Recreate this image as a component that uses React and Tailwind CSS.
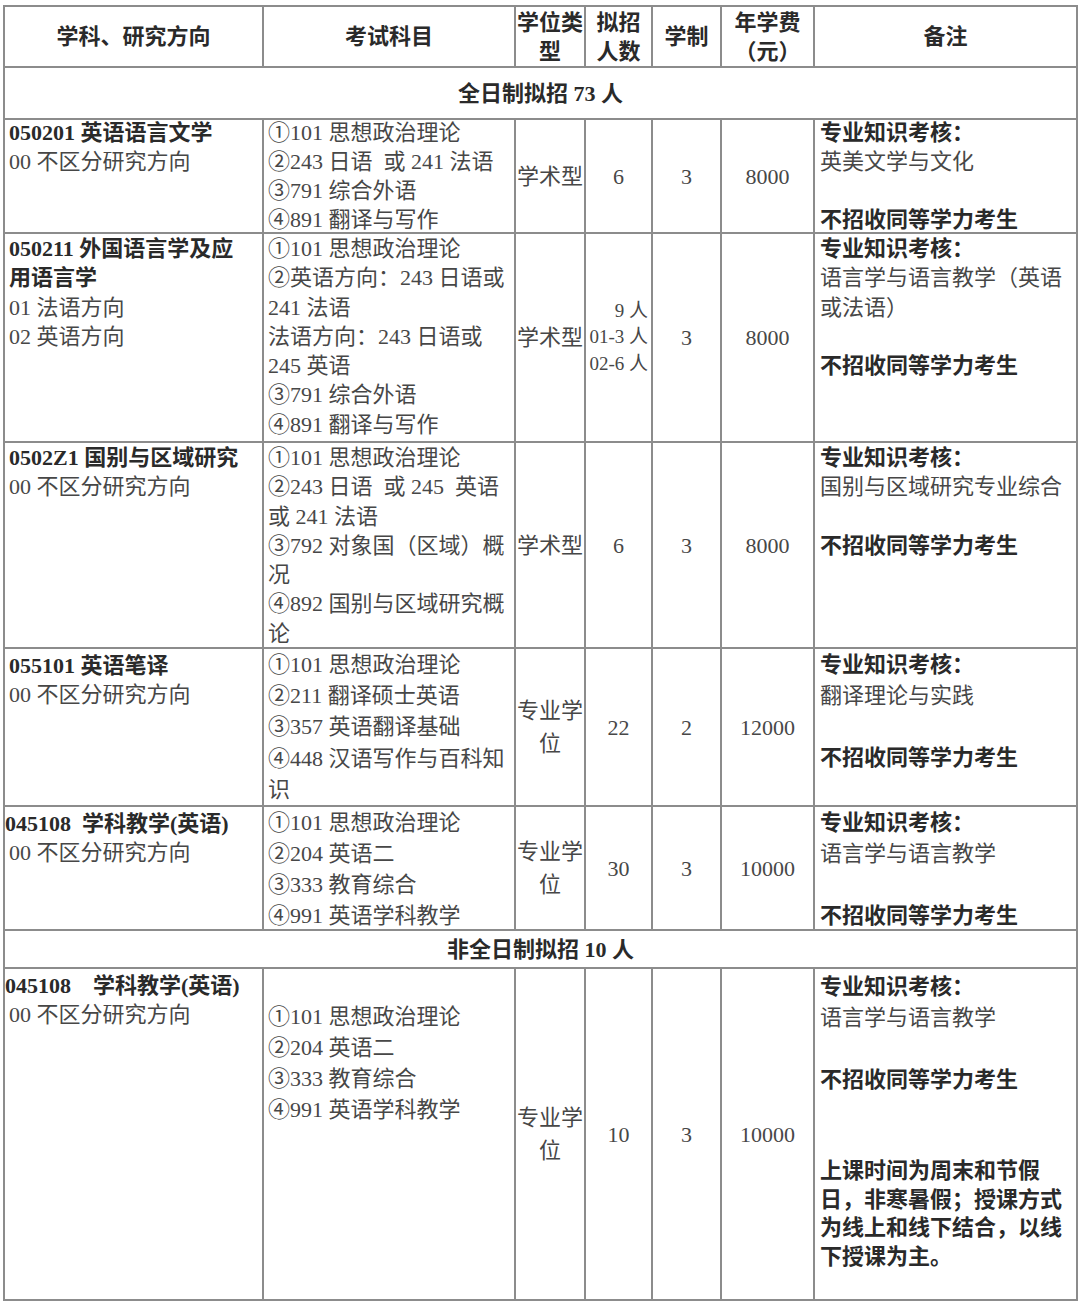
import React from "react";

const cb = "border-r-2 border-b-2 border-[#8c8c8c] overflow-hidden";
const B = ({ children }) => <div className="font-bold text-[#2a2a2a] whitespace-pre">{children}</div>;
const N = ({ children }) => <div className="whitespace-pre">{children}</div>;
const E = () => <div>&nbsp;</div>;

function Center({ children, cls = "" }) {
  return <div className={`${cb} flex items-center justify-center text-center ${cls}`}>{children}</div>;
}

export default function App() {
  return (
    <div className="w-[1080px] h-[1305px] bg-white font-['Liberation_Serif','Noto_Sans_CJK_SC',serif] text-[22px] text-[#474747] pt-[5px] pl-[3px]">
      <div className="grid w-[1075px] border-l-2 border-t-2 border-[#8c8c8c] grid-cols-[259px_252px_70px_67px_69px_93px_263px] grid-rows-[61px_52px_114px_209px_206px_158px_124px_38px_332px]">
        {/* header */}
        <Center cls="font-bold text-[#2a2a2a]">学科、研究方向</Center>
        <Center cls="font-bold text-[#2a2a2a]">考试科目</Center>
        <Center cls="font-bold text-[#2a2a2a] leading-[29px]"><div>学位类<br />型</div></Center>
        <Center cls="font-bold text-[#2a2a2a] leading-[29px]"><div>拟招<br />人数</div></Center>
        <Center cls="font-bold text-[#2a2a2a]">学制</Center>
        <Center cls="font-bold text-[#2a2a2a] leading-[29px]"><div>年学费<br />（元）</div></Center>
        <Center cls="font-bold text-[#2a2a2a]">备注</Center>

        {/* section 1 */}
        <Center cls="col-span-7 font-bold text-[#2a2a2a]">全日制拟招 73 人</Center>

        {/* row 1 */}
        <div className={`${cb} pl-[4px] leading-[29px] -mt-0`}>
          <div className="-mt-[2px]">
            <B>050201 英语语言文学</B>
            <N>00 不区分研究方向</N>
          </div>
        </div>
        <div className={`${cb} pl-[4px] leading-[29px]`}>
          <div className="-mt-[2px]">
            <N>①101 思想政治理论</N>
            <N>②243 日语  或 241 法语</N>
            <N>③791 综合外语</N>
            <N>④891 翻译与写作</N>
          </div>
        </div>
        <Center>学术型</Center>
        <Center>6</Center>
        <Center>3</Center>
        <Center>8000</Center>
        <div className={`${cb} pl-[5px] leading-[29px]`}>
          <div className="-mt-[2px]">
            <B>专业知识考核：</B>
            <N>英美文学与文化</N>
            <E />
            <B>不招收同等学力考生</B>
          </div>
        </div>

        {/* row 2 */}
        <div className={`${cb} pl-[4px] leading-[29.3px]`}>
          <B>050211 外国语言学及应</B>
          <B>用语言学</B>
          <N>01 法语方向</N>
          <N>02 英语方向</N>
        </div>
        <div className={`${cb} pl-[4px] leading-[29.3px]`}>
          <N>①101 思想政治理论</N>
          <N>②英语方向：243 日语或</N>
          <N>241 法语</N>
          <N>法语方向：243 日语或</N>
          <N>245 英语</N>
          <N>③791 综合外语</N>
          <N>④891 翻译与写作</N>
        </div>
        <Center>学术型</Center>
        <div className={`${cb} flex items-center justify-end pr-[3px]`}>
          <div className="text-right text-[19px] leading-[26.5px]">
            <div>9 人</div>
            <div>01-3 人</div>
            <div>02-6 人</div>
          </div>
        </div>
        <Center>3</Center>
        <Center>8000</Center>
        <div className={`${cb} pl-[5px] leading-[29.3px]`}>
          <B>专业知识考核：</B>
          <N>语言学与语言教学（英语</N>
          <N>或法语）</N>
          <E />
          <B>不招收同等学力考生</B>
        </div>

        {/* row 3 */}
        <div className={`${cb} pl-[4px] leading-[29.3px]`}>
          <B>0502Z1 国别与区域研究</B>
          <N>00 不区分研究方向</N>
        </div>
        <div className={`${cb} pl-[4px] leading-[29.3px]`}>
          <N>①101 思想政治理论</N>
          <N>②243 日语  或 245  英语</N>
          <N>或 241 法语</N>
          <N>③792 对象国（区域）概</N>
          <N>况</N>
          <N>④892 国别与区域研究概</N>
          <N>论</N>
        </div>
        <Center>学术型</Center>
        <Center>6</Center>
        <Center>3</Center>
        <Center>8000</Center>
        <div className={`${cb} pl-[5px] leading-[29.3px]`}>
          <B>专业知识考核：</B>
          <N>国别与区域研究专业综合</N>
          <E />
          <B>不招收同等学力考生</B>
        </div>

        {/* row 4 */}
        <div className={`${cb} pl-[4px] leading-[29px] pt-[2px]`}>
          <B>055101 英语笔译</B>
          <N>00 不区分研究方向</N>
        </div>
        <div className={`${cb} pl-[4px] leading-[31.2px]`}>
          <N>①101 思想政治理论</N>
          <N>②211 翻译硕士英语</N>
          <N>③357 英语翻译基础</N>
          <N>④448 汉语写作与百科知</N>
          <N>识</N>
        </div>
        <Center cls="leading-[33px]"><div>专业学<br />位</div></Center>
        <Center>22</Center>
        <Center>2</Center>
        <Center>12000</Center>
        <div className={`${cb} pl-[5px] leading-[31px]`}>
          <B>专业知识考核：</B>
          <N>翻译理论与实践</N>
          <E />
          <B>不招收同等学力考生</B>
        </div>

        {/* row 5 */}
        <div className={`${cb} pl-[4px] leading-[29px] pt-[2px]`}>
          <div className="-ml-[4px]"><B>045108  学科教学(英语)</B></div>
          <N>00 不区分研究方向</N>
        </div>
        <div className={`${cb} pl-[4px] leading-[31px]`}>
          <N>①101 思想政治理论</N>
          <N>②204 英语二</N>
          <N>③333 教育综合</N>
          <N>④991 英语学科教学</N>
        </div>
        <Center cls="leading-[33px]"><div>专业学<br />位</div></Center>
        <Center>30</Center>
        <Center>3</Center>
        <Center>10000</Center>
        <div className={`${cb} pl-[5px] leading-[31px]`}>
          <B>专业知识考核：</B>
          <N>语言学与语言教学</N>
          <E />
          <B>不招收同等学力考生</B>
        </div>

        {/* section 2 */}
        <Center cls="col-span-7 font-bold text-[#2a2a2a]">非全日制拟招 10 人</Center>

        {/* row 6 */}
        <div className={`${cb} pl-[4px] leading-[29px] pt-[2px]`}>
          <div className="-ml-[4px]"><B>045108    学科教学(英语)</B></div>
          <N>00 不区分研究方向</N>
        </div>
        <div className={`${cb} pl-[4px] leading-[31px] pt-[1px]`}>
          <E />
          <N>①101 思想政治理论</N>
          <N>②204 英语二</N>
          <N>③333 教育综合</N>
          <N>④991 英语学科教学</N>
        </div>
        <Center cls="leading-[33px]"><div>专业学<br />位</div></Center>
        <Center>10</Center>
        <Center>3</Center>
        <Center>10000</Center>
        <div className={`${cb} pl-[5px] leading-[31px] pt-[2px]`}>
          <B>专业知识考核：</B>
          <N>语言学与语言教学</N>
          <E />
          <B>不招收同等学力考生</B>
          <E />
          <E />
          <div className="leading-[28.7px] font-bold text-[#2a2a2a]">
            <div className="whitespace-pre">上课时间为周末和节假</div>
            <div className="whitespace-pre">日，非寒暑假；授课方式</div>
            <div className="whitespace-pre">为线上和线下结合，以线</div>
            <div className="whitespace-pre">下授课为主。</div>
          </div>
        </div>
      </div>
    </div>
  );
}
